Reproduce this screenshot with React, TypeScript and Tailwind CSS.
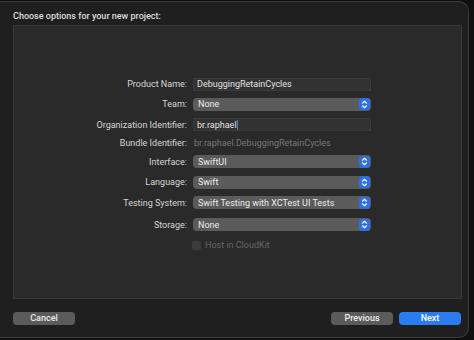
import React from 'react'

type Row =
  | { label: string; kind: 'text'; value: string; h: string; caret?: boolean }
  | { label: string; kind: 'popup'; value: string; h: string }
  | { label: string; kind: 'plain'; value: string; h: string }

const ROWS: Row[] = [
  { label: 'Product Name:', kind: 'text', value: 'DebuggingRetainCycles', h: 'h-[20px]' },
  { label: 'Team:', kind: 'popup', value: 'None', h: 'h-[20px]' },
  { label: 'Organization Identifier:', kind: 'text', value: 'br.raphael', h: 'h-[21px]', caret: true },
  { label: 'Bundle Identifier:', kind: 'plain', value: 'br.raphael.DebuggingRetainCycles', h: 'h-[16px]' },
  { label: 'Interface:', kind: 'popup', value: 'SwiftUI', h: 'h-[21px]' },
  { label: 'Language:', kind: 'popup', value: 'Swift', h: 'h-[20px]' },
  { label: 'Testing System:', kind: 'popup', value: 'Swift Testing with XCTest UI Tests', h: 'h-[21px]' },
  { label: 'Storage:', kind: 'popup', value: 'None', h: 'h-[23px]' },
]

function Stepper() {
  return (
    <div className="w-[11px] h-[12px] rounded-[3px] bg-[#2f6fe4] flex items-center justify-center shrink-0">
      <svg width="7" height="9" viewBox="0 0 7 9" fill="none" stroke="#fff" strokeWidth="1.2" strokeLinecap="round" strokeLinejoin="round">
        <path d="M1.5 3.2 L3.5 1.3 L5.5 3.2" />
        <path d="M1.5 5.8 L3.5 7.7 L5.5 5.8" />
      </svg>
    </div>
  )
}

function Field({ row }: { row: Row }) {
  if (row.kind === 'text') {
    return (
      <div className="h-[13px] w-[178px] bg-[#323232] border border-[#3b3b3b] flex items-center px-[3px] text-[#e2e2e2]">
        <span>{row.value}</span>
        {row.caret && <span className="w-[1.5px] h-[10px] bg-[#3d7ff5]" />}
      </div>
    )
  }
  if (row.kind === 'popup') {
    return (
      <div className="h-[13px] w-[178px] bg-[#5b5b5b] rounded-[4px] flex items-center justify-between pl-[5px] pr-[1px] text-[#ececec]">
        <span className="whitespace-nowrap">{row.value}</span>
        <Stepper />
      </div>
    )
  }
  return <div className="pl-[1px] text-[#777777] whitespace-nowrap">{row.value}</div>
}

export default function App() {
  return (
    <div className="w-[474px] h-[340px] bg-[#101010] overflow-hidden text-[9px] leading-[12px]" style={{ fontFamily: 'Roboto, "Noto Sans", sans-serif' }}>
      <div className="mt-[1px] w-[469px] h-[337px] bg-[#1f1f1f] border-y border-r border-[#3a3a3a] rounded-r-[10px] flex flex-col pl-[13px]">
        <div className="pt-[8px] text-[9px] leading-[12px] font-medium text-[#dedede]">Choose options for your new project:</div>

        <div className="mt-[3px] w-[449px] h-[274px] bg-[#2a2a2a] border border-[#383838] pt-[48px] flex flex-col">
          {ROWS.map((row) => (
            <div key={row.label} className={`flex items-center ${row.h}`}>
              <div className="w-[173px] text-right text-[#d6d6d6] whitespace-nowrap">{row.label}</div>
              <div className="ml-[6px]">
                <Field row={row} />
              </div>
            </div>
          ))}
          <div className="flex items-center h-[18px]">
            <div className="w-[173px]" />
            <div className="ml-[5px] flex items-center gap-[4px] text-[#666666]">
              <div className="w-[9px] h-[9px] rounded-[2px] bg-[#3b3b3b]" />
              <span>Host in CloudKit</span>
            </div>
          </div>
        </div>

        <div className="mt-[13px] flex items-center pr-[7px]">
          <button className="w-[62px] h-[13px] rounded-[4px] bg-[#5b5b5b] text-[#ececec] font-medium leading-[13px]">Cancel</button>
          <div className="flex-1" />
          <button className="w-[62px] h-[13px] rounded-[4px] bg-[#5b5b5b] text-[#ececec] font-medium leading-[13px]">Previous</button>
          <button className="ml-[6px] w-[62px] h-[13px] rounded-[4px] bg-[#2a7cf2] text-white font-medium leading-[13px]">Next</button>
        </div>
      </div>
    </div>
  )
}
